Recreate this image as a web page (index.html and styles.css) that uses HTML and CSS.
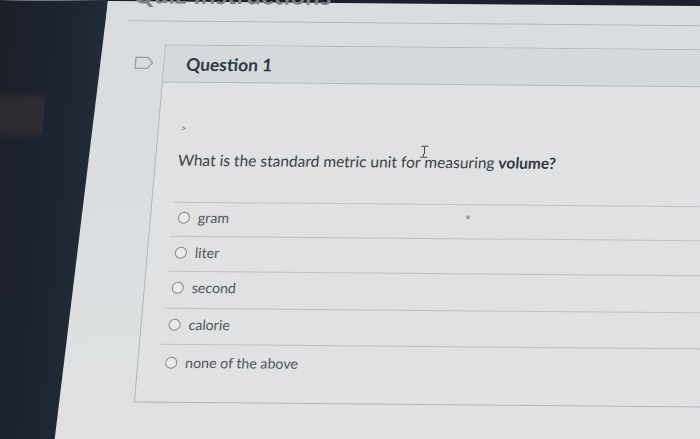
FILE: index.html
```html
<!DOCTYPE html>
<html lang="en">
<head>
<meta charset="utf-8">
<title>Quiz Instructions</title>
<link rel="stylesheet" href="styles.css">
</head>
<body>
<div class="screen">
  <div class="bezel"></div>
  <div class="page">
    <div class="title-bar">
      <h1 class="title">Quiz Instructions</h1>
    </div>
    <div class="quiz-row">
      <div class="flag-col">
        <svg class="flag" width="19" height="13" viewBox="0 0 19 13">
          <path d="M1 1 H13 L18 6.5 L13 12 H1 Z" fill="none" stroke="#9a9ea3" stroke-width="1.4" stroke-linejoin="round"/>
        </svg>
      </div>
      <div class="card">
        <div class="card-header">Question 1</div>
        <div class="card-body">
          <div class="chev">&gt;</div>
          <p class="question">What is the standard metric unit for<span class="ibeam"></span> measuring <strong>volume?</strong></p>
          <ul class="answers">
            <li class="answer"><span class="radio"></span><span class="label">gram</span><span class="speck"></span></li>
            <li class="answer"><span class="radio"></span><span class="label">liter</span></li>
            <li class="answer"><span class="radio"></span><span class="label">second</span></li>
            <li class="answer"><span class="radio"></span><span class="label">calorie</span></li>
            <li class="answer last"><span class="radio"></span><span class="label">none of the above</span></li>
          </ul>
        </div>
      </div>
    </div>
  </div>
</div>
</body>
</html>
```
FILE: styles.css
```css
html, body {
  margin: 0;
  padding: 0;
  width: 700px;
  height: 439px;
  overflow: hidden;
  background: #1c222c;
}

.screen {
  width: 800px;
  height: 500px;
  display: flex;
  transform-origin: 0 0;
  transform: skewX(-5deg) skewY(0.5deg);
  font-family: Lato, "Noto Sans", sans-serif;
  background: linear-gradient(170deg, #d8dbdf 0%, #dcdfe1 45%, #e3e3e0 100%);
}

.bezel {
  width: 110px;
  flex: none;
  clip-path: polygon(0 0, 108px 0, 91px 500px, 0 500px);
  background:
    linear-gradient(180deg, transparent 0, transparent 92px, rgba(62,52,56,0.55) 100px, rgba(62,52,56,0.5) 130px, transparent 140px) 0 0 / 54px 100% no-repeat,
    linear-gradient(90deg, #1b2029 0, #1d2330 55%, #232b38 100%);
}

.page {
  flex: 1;
  padding-left: 20px;
}

.title-bar {
  border-bottom: 1px solid #b4b8bd;
  padding-bottom: 12px;
}

.title {
  margin: -23px 0 0 3px;
  font-size: 26px;
  line-height: 30px;
  font-weight: 700;
  color: #7d8186;
}

.quiz-row {
  display: flex;
  margin-top: 23px;
}

.flag-col {
  width: 39px;
  flex: none;
  padding-top: 12px;
  padding-left: 10px;
  box-sizing: border-box;
}

.flag {
  display: block;
}

.card {
  flex: 1;
  border: 1px solid #b3b7bb;
  border-right: none;
  background: #dfe1e2;
}

.card-header {
  height: 37px;
  box-sizing: border-box;
  padding: 9px 0 0 22px;
  background: #d6d9dc;
  border-bottom: 1px solid #b6babe;
  font-size: 17.4px;
  font-weight: 700;
  color: #2d3b45;
  line-height: 20px;
}

.card-body {
  padding: 0 0 19px 21px;
}

.chev {
  margin: 38px 0 0 1px;
  font-size: 10px;
  line-height: 14px;
  color: #6b6f74;
}

.question {
  margin: 15px 0 32px 1px;
  font-size: 15.5px;
  line-height: 20px;
  color: #3a4248;
}

.question strong {
  font-weight: 700;
  color: #2d3740;
}

.ibeam {
  position: absolute;
  margin-left: -1px;
  margin-top: -6px;
  width: 7px;
  height: 12px;
  border-top: 1px solid #444;
  border-bottom: 1px solid #444;
  background: linear-gradient(90deg, transparent 3px, #444 3px, #444 4px, transparent 4px);
  box-sizing: border-box;
}

.answers {
  list-style: none;
  margin: 0;
  padding: 0;
  border-top: 1px solid #c1c4c7;
}

.answer {
  position: relative;
  display: flex;
  align-items: center;
  gap: 8px;
  height: 34px;
  padding: 0 0 3px 6px;
  box-sizing: border-box;
  border-bottom: 1px solid #bfc2c5;
}

.answer:nth-child(2) {
  height: 35px;
}

.answer:nth-child(3) {
  height: 37px;
  padding-bottom: 4px;
}

.answer:nth-child(4) {
  height: 36px;
  padding-bottom: 4px;
}

.answer.last {
  border-bottom: none;
  height: 38px;
  padding-bottom: 2px;
}

.radio {
  width: 12px;
  height: 12px;
  box-sizing: border-box;
  border: 1.5px solid #85898d;
  border-radius: 50%;
  background: #e9eaea;
  flex: none;
}

.label {
  font-size: 14.2px;
  line-height: 18px;
  color: #50565b;
}

.speck {
  position: absolute;
  left: 294px;
  top: 10px;
  width: 4px;
  height: 4px;
  border-radius: 50%;
  background: #9a9ea2;
}
```
